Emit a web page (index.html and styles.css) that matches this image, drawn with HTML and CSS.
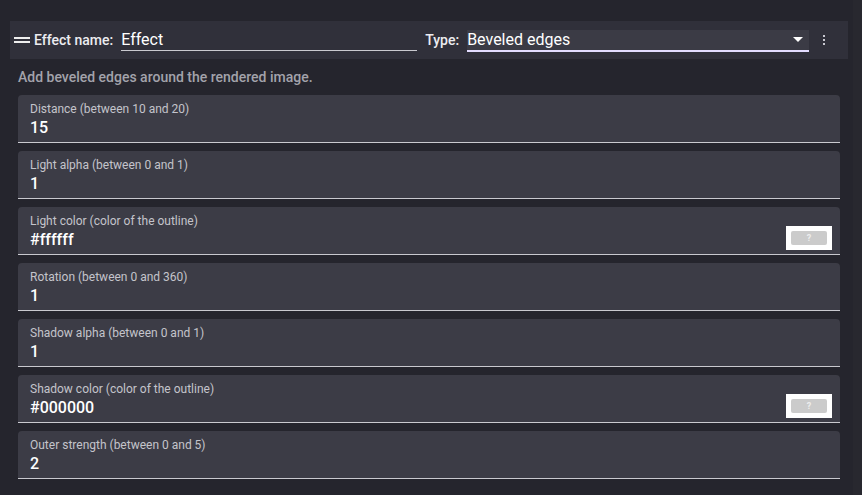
FILE: index.html
```html
<!DOCTYPE html>
<html lang="en">
<head>
    <meta charset="UTF-8">
    <meta name="viewport" content="width=device-width, initial-scale=1.0">
    <title>Effect</title>
    <link rel="stylesheet" href="styles.css">
</head>
<body>
    <div class="page">
        <div class="main">
            <div class="effect-header">
                <div class="drag-handle"><span></span><span></span></div>
                <label class="header-label">Effect name:</label>
                <div class="name-input">Effect</div>
                <label class="header-label type-label">Type:</label>
                <div class="type-select">
                    <span>Beveled edges</span>
                    <span class="select-arrow"></span>
                </div>
                <div class="kebab"><span></span><span></span><span></span></div>
            </div>

            <div class="description">Add beveled edges around the rendered image.</div>

            <div class="fields">
                <div class="field">
                    <div class="field-label">Distance (between 10 and 20)</div>
                    <div class="field-value">15</div>
                </div>
                <div class="field">
                    <div class="field-label">Light alpha (between 0 and 1)</div>
                    <div class="field-value">1</div>
                </div>
                <div class="field">
                    <div class="field-label">Light color (color of the outline)</div>
                    <div class="field-value">#ffffff</div>
                    <div class="color-button"><span>?</span></div>
                </div>
                <div class="field">
                    <div class="field-label">Rotation (between 0 and 360)</div>
                    <div class="field-value">1</div>
                </div>
                <div class="field">
                    <div class="field-label">Shadow alpha (between 0 and 1)</div>
                    <div class="field-value">1</div>
                </div>
                <div class="field">
                    <div class="field-label">Shadow color (color of the outline)</div>
                    <div class="field-value">#000000</div>
                    <div class="color-button"><span>?</span></div>
                </div>
                <div class="field">
                    <div class="field-label">Outer strength (between 0 and 5)</div>
                    <div class="field-value">2</div>
                </div>
            </div>
        </div>
        <div class="scroll-strip"></div>
    </div>
</body>
</html>
```

FILE: styles.css
```css
body {
    margin: 0;
    background: #25252d;
    font-family: 'Roboto', 'Liberation Sans', sans-serif;
    color: #fff;
    overflow: hidden;
}
.page { display: flex; height: 100vh; }
.main { flex: 1; padding: 21px 5px 0 10px; }
.scroll-strip { width: 9px; background: #28282f; }

.effect-header {
    height: 38px; background: #30303a;
    display: flex; align-items: center;
    padding-left: 4px;
}
.drag-handle { width: 16px; display: flex; flex-direction: column; gap: 2px; margin-right: 4px; }
.drag-handle span { display: block; height: 2px; background: #eeeeee; }
.header-label { font-size: 14px; color: #ececf0; font-weight: 500; }
.type-label { margin-left: 8px; }
.name-input {
    width: 296px; margin-left: 8px;
    font-size: 16px; line-height: 20px; height: 20px;
    border-bottom: 1px solid #c9c9cf;
    margin-top: 1px;
}
.type-select {
    width: 342px; margin-left: 8px; height: 20px;
    background: #3b3b45; border-bottom: 2px solid #e3dcff;
    display: flex; align-items: center; justify-content: space-between;
    font-size: 16px; margin-top: 1px;
}
.select-arrow {
    width: 0; height: 0; margin-right: 6px;
    border-left: 5px solid transparent; border-right: 5px solid transparent;
    border-top: 5px solid #ffffff;
}
.kebab { width: 30px; display: flex; flex-direction: column; align-items: center; gap: 2px; }
.kebab span { width: 2px; height: 2px; background: #c8c8d0; }

.description {
    margin: 8px 0 0 8px; height: 20px; line-height: 20px;
    font-size: 14px; color: #a3a3ab; font-weight: 500;
}
.fields { margin: 8px 8px 0 8px; display: flex; flex-direction: column; gap: 8px; }
.field {
    position: relative; height: 47px;
    background: #3c3c46; border-radius: 4px 4px 0 0;
    border-bottom: 1px solid #c9c9cf;
    padding-left: 12px;
}
.field-label { padding-top: 7px; font-size: 12px; line-height: 14px; color: #c4c4cb; }
.field-value { margin-top: 1px; font-size: 16px; line-height: 22px; color: #ffffff; font-weight: 500; }
.color-button {
    position: absolute; right: 8px; top: 19px;
    width: 36px; height: 14px; padding: 5px;
    background: #ffffff;
}
.color-button span {
    display: block; height: 14px; background: #cbcbcb; border-radius: 2px;
    font-size: 9px; line-height: 14px; text-align: center; color: #eeeeee; font-weight: bold;
}
```
